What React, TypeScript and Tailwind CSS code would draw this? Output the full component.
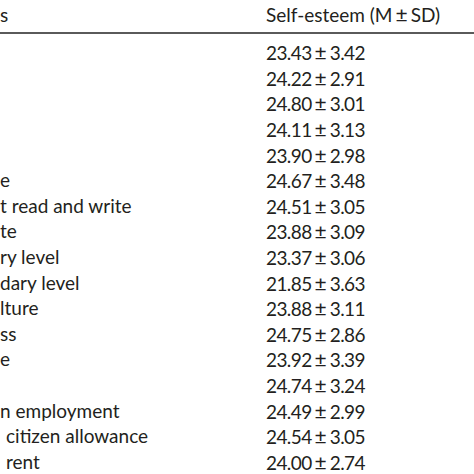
const rows: [string, string, string][] = [
  ["", "23.43", "3.42"],
  ["", "24.22", "2.91"],
  ["", "24.80", "3.01"],
  ["", "24.11", "3.13"],
  ["", "23.90", "2.98"],
  ["e", "24.67", "3.48"],
  ["t read and write", "24.51", "3.05"],
  ["te", "23.88", "3.09"],
  ["ry level", "23.37", "3.06"],
  ["dary level", "21.85", "3.63"],
  ["lture", "23.88", "3.11"],
  ["ss", "24.75", "2.86"],
  ["e", "23.92", "3.39"],
  ["", "24.74", "3.24"],
  ["n employment", "24.49", "2.99"],
  [" citizen allowance", "24.54", "3.05"],
  [" rent", "24.00", "2.74"],
];

const PlusMinus = () => <span className="mx-[3px] text-[21px] tracking-normal">±</span>;

export default function App() {
  return (
    <div
      className="w-[474px] h-[474px] overflow-hidden bg-white text-[#231f20] text-[19px]"
      style={{ fontFamily: "Lato, 'Open Sans', sans-serif" }}
    >
      <div className="grid grid-cols-[266px_1fr] h-[32px] items-end pb-[8px] leading-none">
        <div>s</div>
        <div className="whitespace-pre">
          Self-esteem (M<PlusMinus />SD)
        </div>
      </div>
      <div className="h-[2px] bg-[#5a5a5a]" />
      <div className="pt-[5px]">
        {rows.map(([label, m, sd], i) => (
          <div key={i} className="grid grid-cols-[266px_1fr] h-[25.6px] items-center leading-none">
            <div className="whitespace-pre">
              {label.startsWith(" ") ? <span className="pl-[6px]">{label.trim()}</span> : label}
            </div>
            <div className="whitespace-pre tracking-[-0.6px]">
              {m}
              <PlusMinus />
              {sd}
            </div>
          </div>
        ))}
      </div>
    </div>
  );
}
